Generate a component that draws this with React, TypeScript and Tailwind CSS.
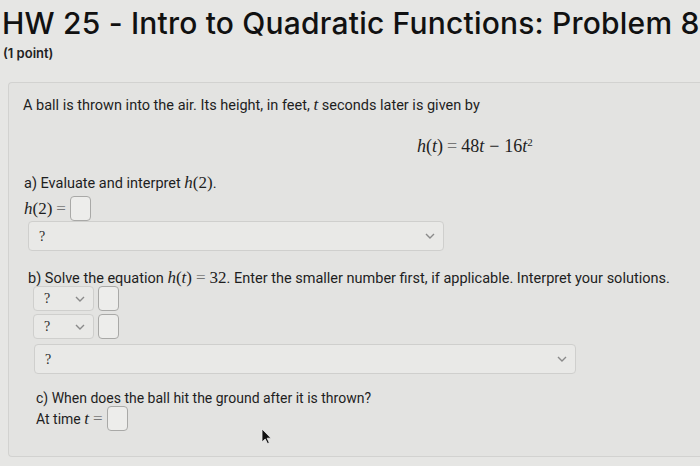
import React from 'react';

const serif = { fontFamily: '"Liberation Serif", "DejaVu Serif", serif' };

const Chevron = () => (
  <svg width="10" height="6" viewBox="0 0 10 6" fill="none" stroke="#8a8a8a" strokeWidth="1.4">
    <path d="M1 1l4 4 4-4" />
  </svg>
);

const AnswerBox = () => (
  <span className="inline-block w-[21px] h-[25px] rounded-[4px] border border-[#a9a9a7] bg-[#ededeb]" />
);

const Select = ({ className = '' }: { className?: string }) => (
  <div
    className={`flex items-center justify-between rounded-[4px] border border-[#cfcfcd] bg-[#e9e9e7] pl-[10px] pr-[8px] ${className}`}
  >
    <span className="text-[14px] text-[#2a2a2a]" style={serif}>?</span>
    <Chevron />
  </div>
);

const M = ({ children }: { children: React.ReactNode }) => (
  <span className="italic text-[17px]" style={serif}>{children}</span>
);

const Eq = () => <span className="mx-[4px] text-[#777]">=</span>;

export default function App() {
  return (
    <div
      className="w-[700px] h-[466px] overflow-hidden bg-[#e6e6e4] text-[#1e1e1e]"
      style={{ fontFamily: 'Roboto, "Liberation Sans", Arial, sans-serif' }}
    >
      <h1
        className="pl-[2px] pt-[5px] text-[30px] leading-[36px] font-medium text-[#111] whitespace-nowrap tracking-[0.2px]"
        style={{ fontFamily: 'Inter, "Liberation Sans", Arial, sans-serif' }}
      >
        HW 25 - Intro to Quadratic Functions: Problem 8
      </h1>
      <div
        className="pl-[3px] mt-[3px] text-[13px] font-semibold text-[#222]"
        style={{ fontFamily: 'Inter, "Liberation Sans", Arial, sans-serif' }}
      >
        (1 point)
      </div>

      <div className="relative ml-[8px] mt-[18px] h-[375px] border-t border-l border-b border-[#d2d2d0] rounded-l-[4px] bg-[#e3e3e1] pt-[12px] text-[14.5px]">
        <p className="pl-[14px] leading-[20px]">
          A ball is thrown into the air. Its height, in feet, <M>t</M> seconds later is given by
        </p>
        <div className="mt-[20px] pl-[408px] text-[18px] leading-[20px] whitespace-nowrap" style={serif}>
          <i>h</i>(<i>t</i>)<Eq />48<i>t</i>
          <span className="mx-[5px]">−</span>16<i>t</i>
          <sup className="text-[11px]">2</sup>
        </div>

        <div className="mt-[17px] pl-[15px] leading-[20px]">
          a) Evaluate and interpret <span className="text-[17px]" style={serif}><i>h</i>(2)</span>.
        </div>
        <div className="pl-[15px] mt-[2px] flex items-center text-[17px]" style={serif}>
          <span><i>h</i>(2)<Eq /></span>
          <AnswerBox />
        </div>
        <Select className="ml-[19px] mt-[0px] w-[416px] h-[30px]" />

        <div className="mt-[17px] pl-[19px] leading-[20px] whitespace-nowrap">
          b) Solve the equation <span className="text-[17px]" style={serif}><i>h</i>(<i>t</i>)<Eq />32</span>. Enter the smaller number first, if applicable. Interpret your solutions.
        </div>
        <div className="ml-[24px] mt-[-3px] flex flex-col gap-[3px]">
          <div className="flex items-center gap-[4px]">
            <Select className="w-[61px] h-[25px]" />
            <AnswerBox />
          </div>
          <div className="flex items-center gap-[4px]">
            <Select className="w-[61px] h-[25px]" />
            <AnswerBox />
          </div>
          <Select className="ml-[1px] mt-[2px] w-[542px] h-[30px]" />
        </div>

        <div className="mt-[14px] pl-[27px] leading-[20px] text-[14px]">
          c) When does the ball hit the ground after it is thrown?
        </div>
        <div className="pl-[27px] mt-[-2px] flex items-center text-[14px]">
          <span>
            At time <M>t</M>
            <span style={serif} className="text-[17px]"><Eq /></span>
          </span>
          <AnswerBox />
        </div>

        <svg
          className="absolute left-[252px] top-[345px]"
          width="12"
          height="16"
          viewBox="0 0 12 16"
        >
          <path d="M1 1v13l3.2-3 2.3 4.6 1.8-.9-2.2-4.5H10z" fill="#111" stroke="#eee" strokeWidth="0.8" />
        </svg>
      </div>
    </div>
  );
}
